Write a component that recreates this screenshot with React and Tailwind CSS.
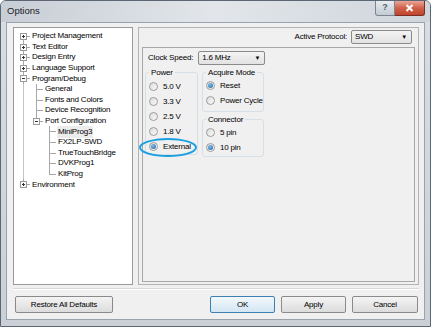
import React from 'react';

const tree = [
  { t: 'Project Management', l: 0, e: '+', g: [], first: true },
  { t: 'Text Editor', l: 0, e: '+', g: [] },
  { t: 'Design Entry', l: 0, e: '+', g: [] },
  { t: 'Language Support', l: 0, e: '+', g: [] },
  { t: 'Program/Debug', l: 0, e: '-', g: [] },
  { t: 'General', l: 1, g: [true] },
  { t: 'Fonts and Colors', l: 1, g: [true] },
  { t: 'Device Recognition', l: 1, g: [true] },
  { t: 'Port Configuration', l: 1, e: '-', g: [true], last: true },
  { t: 'MiniProg3', l: 2, g: [true, false], sel: true },
  { t: 'FX2LP-SWD', l: 2, g: [true, false] },
  { t: 'TrueTouchBridge', l: 2, g: [true, false] },
  { t: 'DVKProg1', l: 2, g: [true, false] },
  { t: 'KitProg', l: 2, g: [true, false], last: true },
  { t: 'Environment', l: 0, e: '+', g: [], last: true },
];

function Expander({ sign }) {
  return (
    <svg width="7" height="7" viewBox="0 0 7 7" className="absolute left-[3px] top-[2px]">
      <rect x="0.5" y="0.5" width="6" height="6" fill="#fdfdfd" stroke="#9a9a9a" />
      <line x1="2" y1="3.5" x2="5" y2="3.5" stroke="#333" />
      {sign === '+' && <line x1="3.5" y1="2" x2="3.5" y2="5" stroke="#333" />}
    </svg>
  );
}

function TreeRow({ row }) {
  return (
    <div className="flex h-[10.6px] items-center">
      {row.g.map((on, i) => (
        <div key={i} className="relative w-[13px] self-stretch">
          {on && <span className="absolute left-[6px] top-0 bottom-0 border-l border-[#c4c4c4]" />}
        </div>
      ))}
      <div className="relative w-[13px] self-stretch">
        {!row.first && <span className="absolute left-[6px] top-0 h-[5px] border-l border-[#a8a8a8]" />}
        {!row.last && <span className="absolute left-[6px] top-[5px] bottom-0 border-l border-[#a8a8a8]" />}
        <span className="absolute left-[6px] right-0 top-[5px] border-t border-[#a8a8a8]" />
        {row.e && <Expander sign={row.e} />}
      </div>
      <span className={`ml-[1px] whitespace-nowrap px-[1px] ${row.sel ? 'bg-[#ececec]' : ''}`}>{row.t}</span>
    </div>
  );
}

function Radio({ label, on, children }) {
  return (
    <div className="relative flex h-[15px] items-center gap-[5px] pl-[3px]">
      <span className="flex h-[9px] w-[9px] items-center justify-center rounded-full border border-[#9c9c9c] bg-gradient-to-br from-[#dcdcdc] to-[#fafafa]">
        {on && <span className="h-[5px] w-[5px] rounded-full bg-[radial-gradient(circle_at_40%_35%,#7fc0ee,#1d5c9b)]" />}
      </span>
      <span>{label}</span>
      {children}
    </div>
  );
}

function Group({ title, className, children }) {
  return (
    <fieldset className={`rounded-[3px] border border-[#d5dfe5] ${className}`}>
      <legend className="ml-[3px] px-[2px] leading-[9px]">{title}</legend>
      {children}
    </fieldset>
  );
}

function Combo({ value, className }) {
  return (
    <div className={`flex h-[14px] items-center justify-between rounded-[2px] border border-[#8a8a8a] bg-gradient-to-b from-[#f4f4f4] to-[#e2e2e2] pl-[3px] pr-[4px] ${className}`}>
      <span>{value}</span>
      <span className="text-[6px] leading-none text-black">▼</span>
    </div>
  );
}

function Button({ children, primary, className }) {
  return (
    <div
      className={`flex h-[17px] items-center justify-center rounded-[2px] border ${
        primary
          ? 'border-[#3c7fb1] bg-gradient-to-b from-[#f2f8fc] to-[#d3e6f3]'
          : 'border-[#8a8a8a] bg-gradient-to-b from-[#f4f4f4] to-[#dcdcdc]'
      } ${className}`}
    >
      {children}
    </div>
  );
}

export default function App() {
  return (
    <div className="flex h-[327px] w-[431px] flex-col overflow-hidden rounded-t-[6px] border border-[#5d6773] bg-gradient-to-b from-[#d9dee5] to-[#c9d0d8] font-['Liberation_Sans',sans-serif] text-[8px] tracking-[-0.2px] text-black">
      {/* Title bar */}
      <div className="flex h-[21px] shrink-0 items-start justify-between bg-gradient-to-r from-[#c8ced6] via-[#e2e6ea] to-[#cfd5dc] pl-[6px] pr-[5px]">
        <span className="mt-[3px] text-[9.5px] tracking-normal text-[#1b1b1b]">Options</span>
        <div className="flex">
          <div className="flex h-[15px] w-[20px] items-center justify-center rounded-bl-[3px] border border-t-0 border-[#7b8592] bg-gradient-to-b from-[#e8ecf0] to-[#c2cad3] text-[9px] font-bold text-[#56606b]">?</div>
          <div className="flex h-[15px] w-[30px] items-center justify-center rounded-br-[3px] border border-l-0 border-t-0 border-[#7a2d22] bg-gradient-to-b from-[#e9a597] via-[#d0604a] to-[#c2432b]">
            <svg width="9" height="8" viewBox="0 0 9 8">
              <path d="M1.5 1 L7.5 7 M7.5 1 L1.5 7" stroke="#fff" strokeWidth="2" />
            </svg>
          </div>
        </div>
      </div>

      {/* Client */}
      <div className="mx-[5px] mb-[6px] flex flex-1 flex-col border border-[#9aa3ad] bg-[#f0f0f0] pl-[6px] pr-[5px] pt-[4px]">
        <div className="flex h-[258px] gap-[5px]">
          {/* Tree */}
          <div className="w-[120px] border border-[#9a9a9a] bg-white pl-[3px] pt-[3px]">
            {tree.map((r) => (
              <TreeRow key={r.t} row={r} />
            ))}
          </div>

          {/* Right panel */}
          <div className="flex flex-1 flex-col border border-[#b4b4b4] px-[3px] pb-[2px] pt-[2px]">
            <div className="flex items-center justify-end gap-[4px] pr-[3px]">
              <span>Active Protocol:</span>
              <Combo value="SWD" className="w-[61px]" />
            </div>
            <div className="mt-[3px] flex-1 border border-[#a8a8a8] pl-[2px] pt-[3px]">
              <div className="flex items-center gap-[5px] pl-[3px]">
                <span>Clock Speed:</span>
                <Combo value="1.6 MHz" className="w-[67px]" />
              </div>
              <div className="mt-[3px] flex items-start gap-[4px]">
                <Group title="Power" className="w-[53px] pt-[2px]">
                  <Radio label="5.0 V" />
                  <Radio label="3.3 V" />
                  <Radio label="2.5 V" />
                  <Radio label="1.8 V" />
                  <Radio label="External" on>
                    <span className="absolute left-[-7px] top-[-1px] h-[19px] w-[58px] rounded-[50%] border-[2.5px] border-[#1a9fe0]" />
                  </Radio>
                </Group>
                <div className="flex w-[62px] flex-col gap-[3px]">
                  <Group title="Acquire Mode" className="pb-[3px] pt-[1px]">
                    <Radio label="Reset" on />
                    <Radio label="Power Cycle" />
                  </Group>
                  <Group title="Connector" className="pb-[1px] pt-[1px]">
                    <Radio label="5 pin" />
                    <Radio label="10 pin" on />
                  </Group>
                </div>
              </div>
            </div>
          </div>
        </div>

        <div className="mt-[3px] h-[2px] border-t border-b border-t-[#d8d8d8] border-b-white" />

        <div className="mt-[6px] flex items-center pl-[2px] pr-[1px]">
          <Button className="w-[98px]">Restore All Defaults</Button>
          <div className="ml-auto flex gap-[6px]">
            <Button primary className="w-[65px]">OK</Button>
            <Button className="w-[65px]">Apply</Button>
            <Button className="w-[66px]">Cancel</Button>
          </div>
        </div>
      </div>
    </div>
  );
}
